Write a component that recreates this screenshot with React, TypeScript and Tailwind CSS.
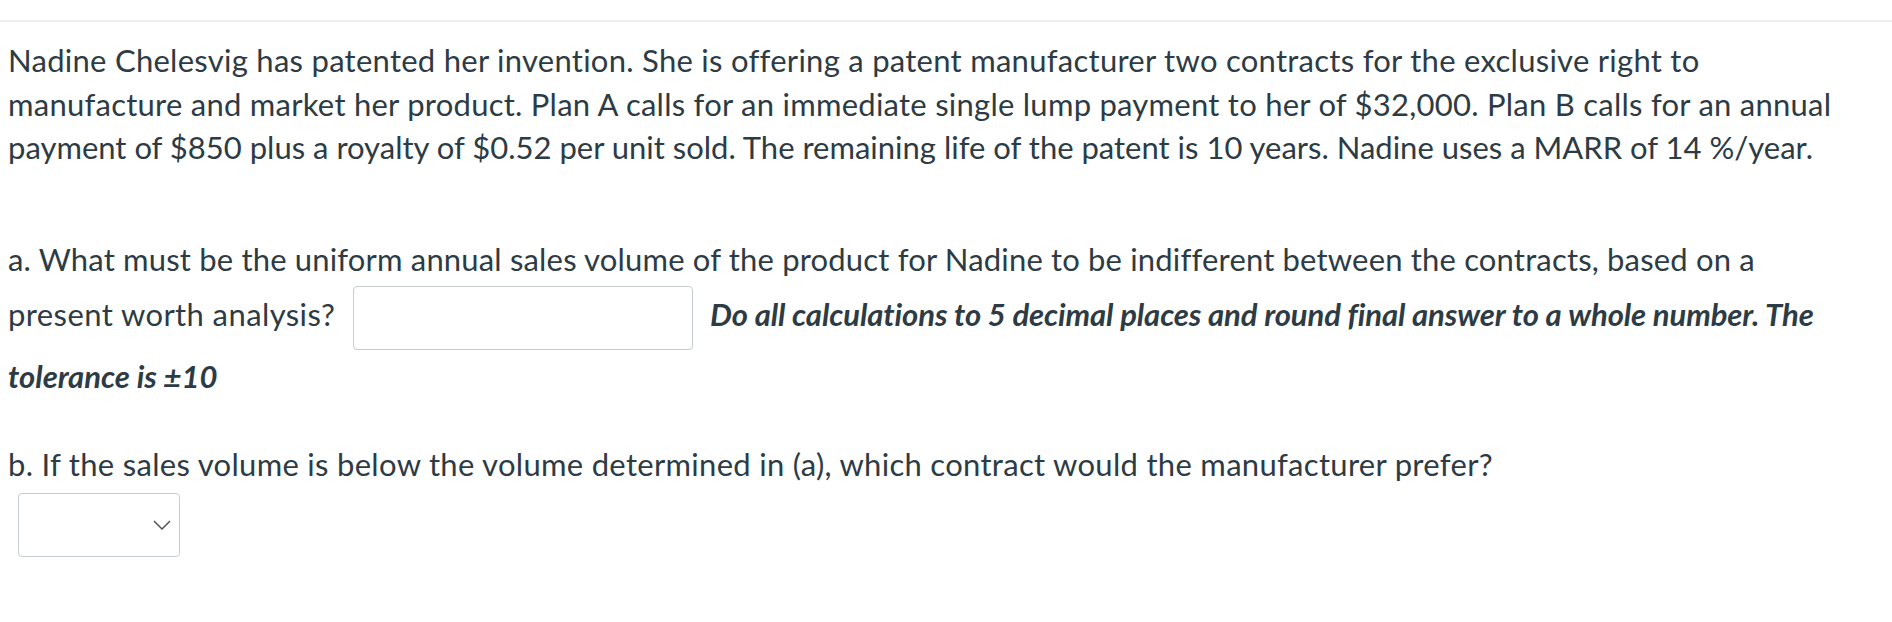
import React from "react";

export default function App() {
  return (
    <div className="w-[1892px] h-[622px] bg-white overflow-hidden font-['Lato',sans-serif] text-[#2d3b45]">
      <div className="h-[20px]" />
      <div className="h-[2px] bg-[#eeeeee]" />
      <div className="pl-[8px] pt-[17px] text-[31px] leading-[43.5px]">
        <p>
          <span className="tracking-[0.27px]">
            Nadine Chelesvig has patented her invention. She is offering a patent manufacturer two contracts for the exclusive right to
          </span>
          <br />
          <span className="tracking-[0.25px]">
            manufacture and market her product. Plan A calls for an immediate single lump payment to her of $32,000. Plan B calls for an annual
          </span>
          <br />
          <span>
            payment of $850 plus a royalty of $0.52 per unit sold. The remaining life of the patent is 10 years. Nadine uses a MARR of 14&nbsp;%/year.
          </span>
        </p>
        <p className="mt-[68px]">
          <span className="tracking-[0.17px]">
            a. What must be the uniform annual sales volume of the product for Nadine to be indifferent between the contracts, based on a
          </span>
          <br />
          <span className="tracking-[0.4px]">present worth analysis?</span>{" "}
          <span
            role="textbox"
            aria-label="answer"
            className="inline-block align-[-29px] w-[340px] h-[64px] my-[5px] ml-[10px] mr-[9px] border border-[#c7cdd1] rounded-[4px] bg-white"
          />{" "}
          <strong className="italic font-bold tracking-[-0.08px]">
            Do all calculations to 5 decimal places and round final answer to a whole number. The
          </strong>
          <br />
          <strong className="italic font-bold">tolerance is ±10</strong>
        </p>
        <p className="mt-[44px] tracking-[0.3px]">
          b. If the sales volume is below the volume determined in (a), which contract would the manufacturer prefer?
        </p>
        <div className="mt-[7px] ml-[10px] w-[162px] h-[64px] border border-[#c7cdd1] rounded-[4px] bg-white flex items-center justify-end pr-[8px]">
          <svg width="18" height="10" viewBox="0 0 18 10" fill="none">
            <polyline points="1,1 9,9 17,1" stroke="#555" strokeWidth="1.5" />
          </svg>
        </div>
      </div>
    </div>
  );
}
